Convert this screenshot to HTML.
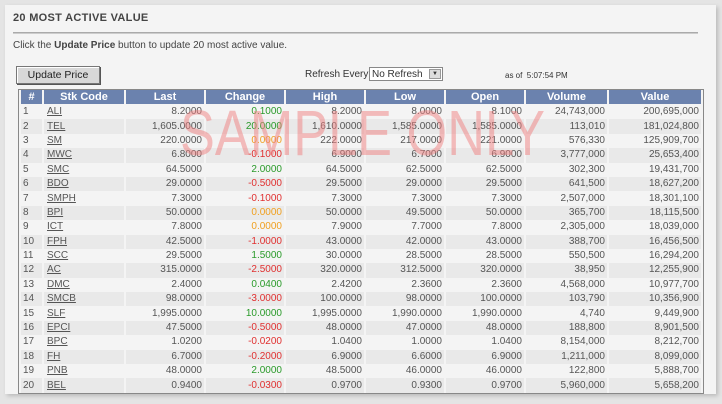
<!DOCTYPE html>
<html><head><meta charset="utf-8"><style>
body{margin:0;width:722px;height:404px;background:#e4e4e4;font-family:"Liberation Sans",sans-serif;position:relative;overflow:hidden}
.panel{position:absolute;left:5px;top:5px;width:711px;height:389px;background:#f4f4f4;box-shadow:2px 2px 4px #bbb}
.title{position:absolute;left:13px;top:12px;font-size:11px;font-weight:bold;color:#444;letter-spacing:.3px}
.line{position:absolute;left:13px;top:32px;width:685px;height:1px;background:#aaa;border-bottom:1px solid #ccc}
.instr{position:absolute;left:13px;top:40px;font-size:10px;color:#444}
.btn{position:absolute;left:16px;top:66px;width:82px;height:16px;background:#d8d8d8;border:1px solid #777;box-shadow:inset 1px 1px 0 #fff,1px 1px 0 #555;font-size:10.5px;color:#222;text-align:center;line-height:16px}
.ref{position:absolute;left:305px;top:69px;font-size:10px;color:#333}
.sel{position:absolute;left:369px;top:67px;width:74px;height:14px;border:1px solid #888;background:#fff;font-size:10px;color:#333;line-height:14px;box-sizing:border-box;padding-left:2px}
.sel b{position:absolute;right:1px;top:1px;width:12px;height:10px;background:#ddd;border:1px solid #999;box-sizing:border-box;font-size:6px;line-height:9px;text-align:center;font-weight:normal}
.asof{position:absolute;left:505px;top:71px;font-size:8px;color:#333}
table{position:absolute;left:18px;top:89px;width:686px;border-collapse:separate;border-spacing:2px 0;border:1px solid #888;font-size:10px;color:#555;background:#f4f4f4}
th{background:#6b82ae;color:#fff;font-size:11px;height:14px;padding:0;border-bottom:1px solid #f4f4f4}
td{height:14.4px;padding:0 2px;text-align:right;line-height:14px}
tr:nth-child(odd) td{background:#e9e9e9}
td.n{text-align:left}td.c{text-align:left;text-decoration:underline;padding-left:3px}
.g{color:#2a9a2a}.r{color:#e03030}.o{color:#f0a020}
svg{position:absolute;left:0;top:0}
</style></head><body>
<div class="panel"></div>
<div class="title">20 MOST ACTIVE VALUE</div>
<div class="line"></div>
<div class="instr">Click the <b>Update Price</b> button to update 20 most active value.</div>
<div class="btn">Update Price</div>
<div class="ref">Refresh Every</div>
<div class="sel">No Refresh<b>▼</b></div>
<div class="asof">as of &nbsp;5:07:54 PM</div>
<table>
<colgroup><col style="width:21px"><col style="width:80px"><col style="width:78px"><col style="width:78px"><col style="width:78px"><col style="width:78px"><col style="width:78px"><col style="width:81px"><col></colgroup>
<tr><th>#</th><th>Stk Code</th><th>Last</th><th>Change</th><th>High</th><th>Low</th><th>Open</th><th>Volume</th><th>Value</th></tr>
<tr><td class="n">1</td><td class="c">ALI</td><td>8.2000</td><td class="g">0.1000</td><td>8.2000</td><td>8.0000</td><td>8.1000</td><td>24,743,000</td><td>200,695,000</td></tr>
<tr><td class="n">2</td><td class="c">TEL</td><td>1,605.0000</td><td class="g">20.0000</td><td>1,610.0000</td><td>1,585.0000</td><td>1,585.0000</td><td>113,010</td><td>181,024,800</td></tr>
<tr><td class="n">3</td><td class="c">SM</td><td>220.0000</td><td class="o">0.0000</td><td>222.0000</td><td>217.0000</td><td>221.0000</td><td>576,330</td><td>125,909,700</td></tr>
<tr><td class="n">4</td><td class="c">MWC</td><td>6.8000</td><td class="r">-0.1000</td><td>6.9000</td><td>6.7000</td><td>6.9000</td><td>3,777,000</td><td>25,653,400</td></tr>
<tr><td class="n">5</td><td class="c">SMC</td><td>64.5000</td><td class="g">2.0000</td><td>64.5000</td><td>62.5000</td><td>62.5000</td><td>302,300</td><td>19,431,700</td></tr>
<tr><td class="n">6</td><td class="c">BDO</td><td>29.0000</td><td class="r">-0.5000</td><td>29.5000</td><td>29.0000</td><td>29.5000</td><td>641,500</td><td>18,627,200</td></tr>
<tr><td class="n">7</td><td class="c">SMPH</td><td>7.3000</td><td class="r">-0.1000</td><td>7.3000</td><td>7.3000</td><td>7.3000</td><td>2,507,000</td><td>18,301,100</td></tr>
<tr><td class="n">8</td><td class="c">BPI</td><td>50.0000</td><td class="o">0.0000</td><td>50.0000</td><td>49.5000</td><td>50.0000</td><td>365,700</td><td>18,115,500</td></tr>
<tr><td class="n">9</td><td class="c">ICT</td><td>7.8000</td><td class="o">0.0000</td><td>7.9000</td><td>7.7000</td><td>7.8000</td><td>2,305,000</td><td>18,039,000</td></tr>
<tr><td class="n">10</td><td class="c">FPH</td><td>42.5000</td><td class="r">-1.0000</td><td>43.0000</td><td>42.0000</td><td>43.0000</td><td>388,700</td><td>16,456,500</td></tr>
<tr><td class="n">11</td><td class="c">SCC</td><td>29.5000</td><td class="g">1.5000</td><td>30.0000</td><td>28.5000</td><td>28.5000</td><td>550,500</td><td>16,294,200</td></tr>
<tr><td class="n">12</td><td class="c">AC</td><td>315.0000</td><td class="r">-2.5000</td><td>320.0000</td><td>312.5000</td><td>320.0000</td><td>38,950</td><td>12,255,900</td></tr>
<tr><td class="n">13</td><td class="c">DMC</td><td>2.4000</td><td class="g">0.0400</td><td>2.4200</td><td>2.3600</td><td>2.3600</td><td>4,568,000</td><td>10,977,700</td></tr>
<tr><td class="n">14</td><td class="c">SMCB</td><td>98.0000</td><td class="r">-3.0000</td><td>100.0000</td><td>98.0000</td><td>100.0000</td><td>103,790</td><td>10,356,900</td></tr>
<tr><td class="n">15</td><td class="c">SLF</td><td>1,995.0000</td><td class="g">10.0000</td><td>1,995.0000</td><td>1,990.0000</td><td>1,990.0000</td><td>4,740</td><td>9,449,900</td></tr>
<tr><td class="n">16</td><td class="c">EPCI</td><td>47.5000</td><td class="r">-0.5000</td><td>48.0000</td><td>47.0000</td><td>48.0000</td><td>188,800</td><td>8,901,500</td></tr>
<tr><td class="n">17</td><td class="c">BPC</td><td>1.0200</td><td class="r">-0.0200</td><td>1.0400</td><td>1.0000</td><td>1.0400</td><td>8,154,000</td><td>8,212,700</td></tr>
<tr><td class="n">18</td><td class="c">FH</td><td>6.7000</td><td class="r">-0.2000</td><td>6.9000</td><td>6.6000</td><td>6.9000</td><td>1,211,000</td><td>8,099,000</td></tr>
<tr><td class="n">19</td><td class="c">PNB</td><td>48.0000</td><td class="g">2.0000</td><td>48.5000</td><td>46.0000</td><td>46.0000</td><td>122,800</td><td>5,888,700</td></tr>
<tr><td class="n">20</td><td class="c">BEL</td><td>0.9400</td><td class="r">-0.0300</td><td>0.9700</td><td>0.9300</td><td>0.9700</td><td>5,960,000</td><td>5,658,200</td></tr>
</table>
<svg width="722" height="404"><text x="180" y="155" font-family="Liberation Sans" font-size="64" fill="#f08080" fill-opacity="0.5" textLength="365" lengthAdjust="spacingAndGlyphs">SAMPLE ONLY</text></svg>
</body></html>
